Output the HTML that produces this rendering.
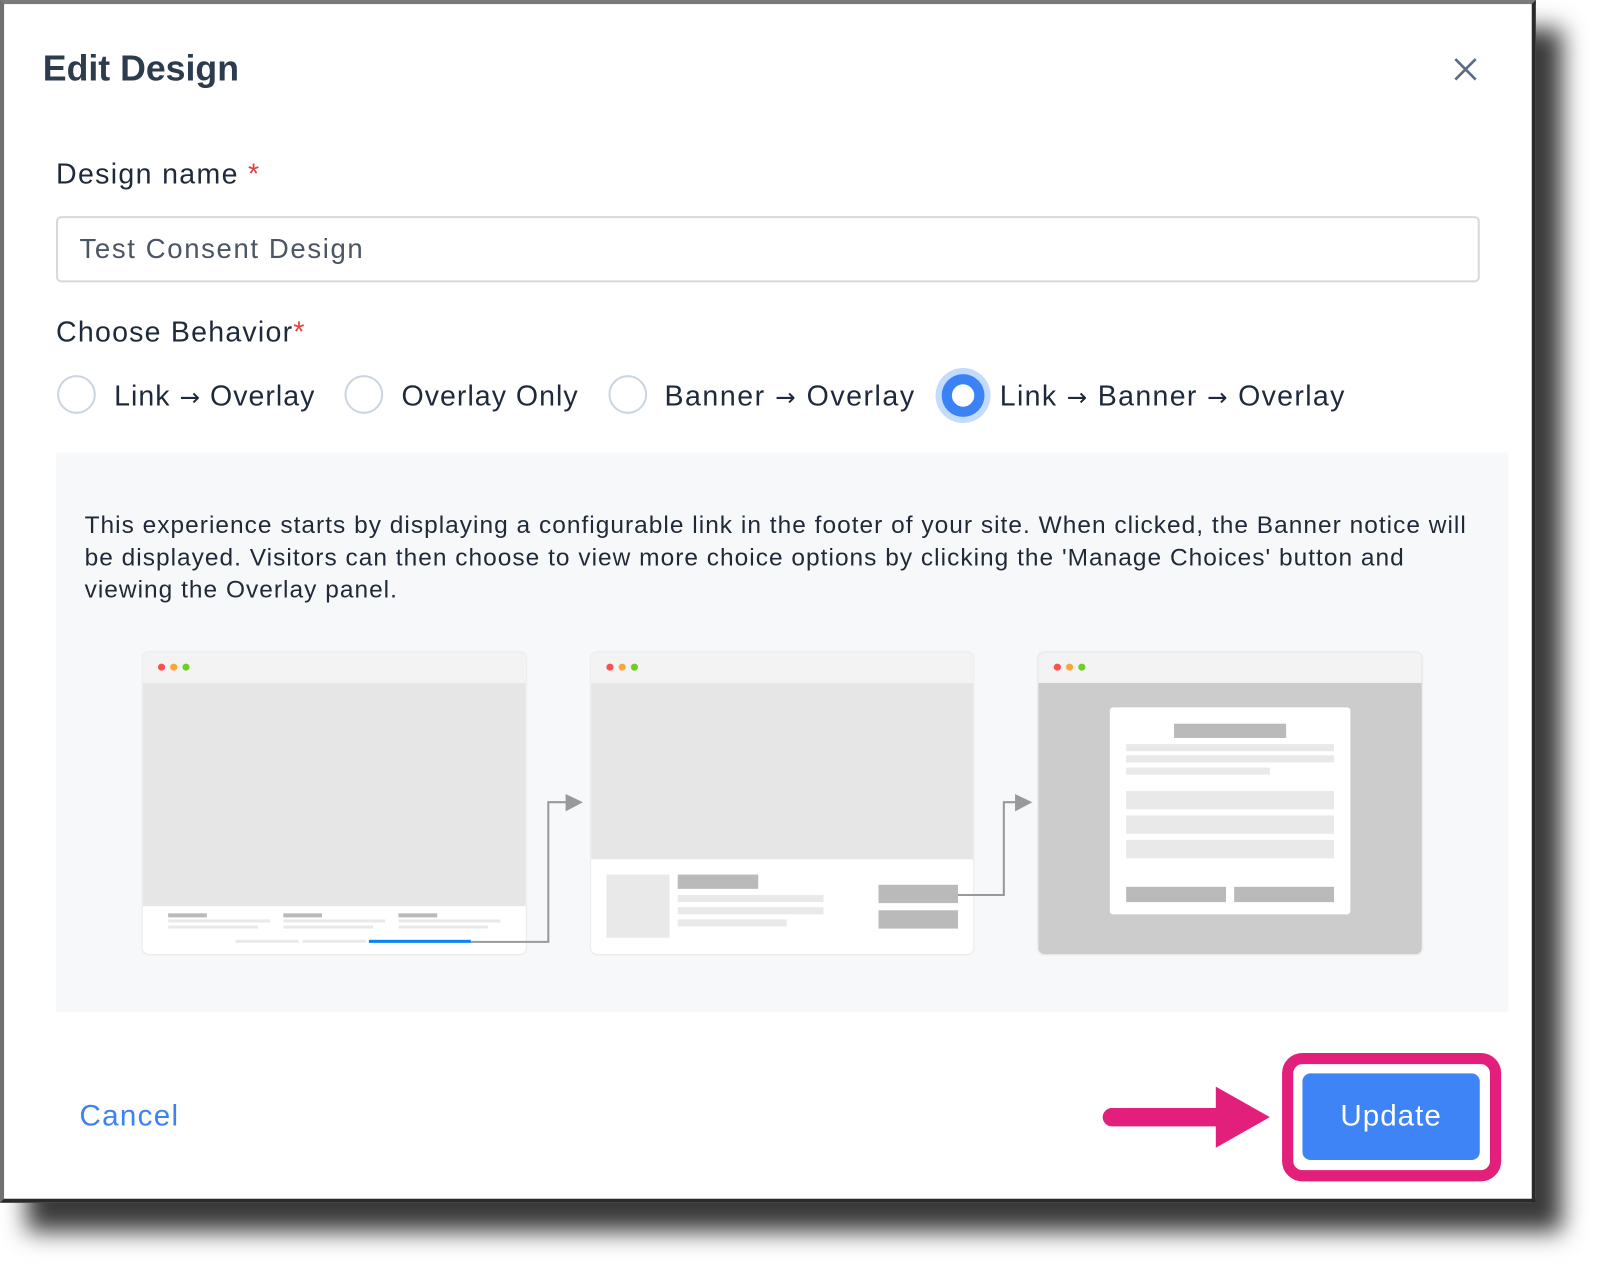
<!DOCTYPE html>
<html><head><meta charset="utf-8"><style>
html,body{margin:0;padding:0;background:#fff;width:1598px;height:1266px;overflow:hidden}
#s{position:absolute;left:0;top:0;width:1568px;height:1242px;transform-origin:0 0;transform:scale(1.01913,1.01932);font-family:"Liberation Sans",sans-serif}
.a{position:absolute}
.dlg{left:0;top:0;width:1499px;height:1172px;background:#fff;border-top:4px solid #7a7a7a;border-left:4px solid #707070;border-right:4px solid #2a2a2a;border-bottom:4px solid #2a2a2a;box-shadow:26px 28px 22px rgba(0,0,0,.78)}
.t{white-space:nowrap;color:#1e293b}
.ar{font-family:"DejaVu Sans",sans-serif;font-size:24px}
.rad{width:38px;height:38px;border:2.5px solid #cbd5e1;border-radius:50%;box-sizing:border-box}
.b{background:#e9e9e9}.d{background:#bababa}
.win{border-radius:6px;overflow:hidden;box-shadow:0 0 2px rgba(0,0,0,.12)}
.hd{position:absolute;left:0;top:0;right:0;height:30px;background:#f3f3f3}
.dot{position:absolute;top:11px;width:7px;height:7px;border-radius:50%}
</style></head><body><div id="s">
<div class="a dlg"></div>
<div class="a t" style="left:42px;top:48px;font-size:35px;font-weight:bold;color:#2d3b4e">Edit Design</div>
<svg class="a" style="left:1426px;top:56px" width="24" height="24" viewBox="0 0 24 24"><path d="M2 2L22 22M22 2L2 22" stroke="#5b6b82" stroke-width="2.6"/></svg>
<div class="a t" style="left:55px;top:155px;font-size:28px;letter-spacing:1.3px">Design name <span style="color:#e53e3e">*</span></div>
<div class="a" style="left:55px;top:212px;width:1397px;height:65px;border:2px solid #d5d9df;border-radius:5px;box-sizing:border-box"></div>
<div class="a t" style="left:78px;top:229px;font-size:27px;color:#4b5563;letter-spacing:1.6px">Test Consent Design</div>
<div class="a t" style="left:55px;top:310px;font-size:28px;letter-spacing:1.2px">Choose Behavior<span style="color:#e53e3e">*</span></div>
<div class="a rad" style="left:56px;top:368px"></div>
<div class="a t" style="left:112px;top:373px;font-size:28px;letter-spacing:1px">Link <span class="ar">→</span> Overlay</div>
<div class="a rad" style="left:338px;top:368px"></div>
<div class="a t" style="left:394px;top:373px;font-size:28px;letter-spacing:1px">Overlay Only</div>
<div class="a rad" style="left:597px;top:368px"></div>
<div class="a t" style="left:652px;top:373px;font-size:28px;letter-spacing:1.5px">Banner <span class="ar">→</span> Overlay</div>
<div class="a" style="left:918px;top:361px;width:54px;height:54px;border-radius:50%;background:#c3dbfd"></div>
<div class="a" style="left:924px;top:367px;width:42px;height:42px;border-radius:50%;background:#3b82f6"></div>
<div class="a" style="left:934px;top:377px;width:22px;height:22px;border-radius:50%;background:#fff"></div>
<div class="a t" style="left:981px;top:373px;font-size:28px;letter-spacing:1.3px">Link <span class="ar">→</span> Banner <span class="ar">→</span> Overlay</div>
<div class="a" style="left:55px;top:444px;width:1425px;height:549px;background:#f7f8fa"></div>
<div class="a t" style="left:83px;top:500px;font-size:24px;line-height:31.5px;color:#1f2937;letter-spacing:1.0px">This experience starts by displaying a configurable link in the footer of your site. When clicked, the Banner notice will<br>be displayed. Visitors can then choose to view more choice options by clicking the 'Manage Choices' button and<br>viewing the Overlay panel.</div>

<!-- win1 -->
<div class="a win" style="left:140px;top:640px;width:376px;height:296px;background:#fff">
<div class="hd"></div><div class="dot" style="left:15px;background:#fc5050"></div><div class="dot" style="left:27px;background:#fca43c"></div><div class="dot" style="left:39px;background:#6fcf1f"></div>
<div class="a" style="left:0;top:30px;width:376px;height:219px;background:#e6e6e6"></div>
<div class="a d" style="left:25px;top:256px;width:38px;height:4px"></div><div class="a b" style="left:25px;top:262px;width:100px;height:3px"></div><div class="a b" style="left:25px;top:268px;width:88px;height:3px"></div>
<div class="a d" style="left:138px;top:256px;width:38px;height:4px"></div><div class="a b" style="left:138px;top:262px;width:100px;height:3px"></div><div class="a b" style="left:138px;top:268px;width:88px;height:3px"></div>
<div class="a d" style="left:251px;top:256px;width:38px;height:4px"></div><div class="a b" style="left:251px;top:262px;width:100px;height:3px"></div><div class="a b" style="left:251px;top:268px;width:88px;height:3px"></div>
<div class="a b" style="left:91px;top:282px;width:62px;height:3px"></div><div class="a b" style="left:157px;top:282px;width:62px;height:3px"></div>
<div class="a" style="left:222px;top:282px;width:100px;height:3px;background:#0a84f4"></div>
</div>
<svg class="a" style="left:0;top:0" width="1568" height="1242"><path d="M462 924H538V787H558" fill="none" stroke="#999" stroke-width="2"/><path d="M555 779L572 787L555 796ZM996 779L1013 787L996 796Z" fill="#999"/></svg>
<!-- win2 -->
<div class="a win" style="left:580px;top:640px;width:375px;height:296px;background:#fff">
<div class="hd"></div><div class="dot" style="left:15px;background:#fc5050"></div><div class="dot" style="left:27px;background:#fca43c"></div><div class="dot" style="left:39px;background:#6fcf1f"></div>
<div class="a" style="left:0;top:30px;width:375px;height:173px;background:#e6e6e6"></div>
<div class="a b" style="left:15px;top:218px;width:62px;height:62px"></div>
<div class="a d" style="left:85px;top:218px;width:79px;height:14px"></div>
<div class="a b" style="left:85px;top:238px;width:143px;height:7px"></div><div class="a b" style="left:85px;top:250px;width:143px;height:7px"></div><div class="a b" style="left:85px;top:262px;width:107px;height:7px"></div>
<div class="a d" style="left:282px;top:228px;width:78px;height:18px"></div><div class="a d" style="left:282px;top:253px;width:78px;height:18px"></div>
</div>
<svg class="a" style="left:0;top:0" width="1568" height="1242"><path d="M940 878H985V787H1000" fill="none" stroke="#999" stroke-width="2"/></svg>
<!-- win3 -->
<div class="a win" style="left:1019px;top:640px;width:376px;height:296px;background:#ccc">
<div class="hd"></div><div class="dot" style="left:15px;background:#fc5050"></div><div class="dot" style="left:27px;background:#fca43c"></div><div class="dot" style="left:39px;background:#6fcf1f"></div>
<div class="a" style="left:70px;top:54px;width:236px;height:203px;background:#fff;border-radius:3px"></div>
<div class="a d" style="left:133px;top:70px;width:110px;height:14px"></div>
<div class="a b" style="left:86px;top:90px;width:204px;height:7px"></div><div class="a b" style="left:86px;top:101px;width:204px;height:7px"></div><div class="a b" style="left:86px;top:113px;width:141px;height:7px"></div>
<div class="a b" style="left:86px;top:136px;width:204px;height:18px"></div><div class="a b" style="left:86px;top:160px;width:204px;height:18px"></div><div class="a b" style="left:86px;top:184px;width:204px;height:18px"></div>
<div class="a d" style="left:86px;top:230px;width:98px;height:15px"></div><div class="a d" style="left:192px;top:230px;width:98px;height:15px"></div>
</div>

<div class="a t" style="left:78px;top:1079px;font-size:29px;color:#3b82f6;letter-spacing:1.3px">Cancel</div>
<div class="a" style="left:1082px;top:1087px;width:125px;height:18px;border-radius:9px;background:#e21f7a"></div>
<svg class="a" style="left:1190px;top:1064px" width="60" height="64"><path d="M3 2L56 32L3 62Z" fill="#e21f7a"/></svg>
<div class="a" style="left:1258px;top:1033px;width:215px;height:126px;border:11px solid #e21f7a;border-radius:20px;box-sizing:border-box"></div>
<div class="a" style="left:1278px;top:1053px;width:174px;height:85px;background:#3f84f6;border-radius:8px"></div>
<div class="a t" style="left:1278px;top:1079px;width:174px;text-align:center;font-size:29px;color:#fff;letter-spacing:1px">Update</div>
</div></body></html>
